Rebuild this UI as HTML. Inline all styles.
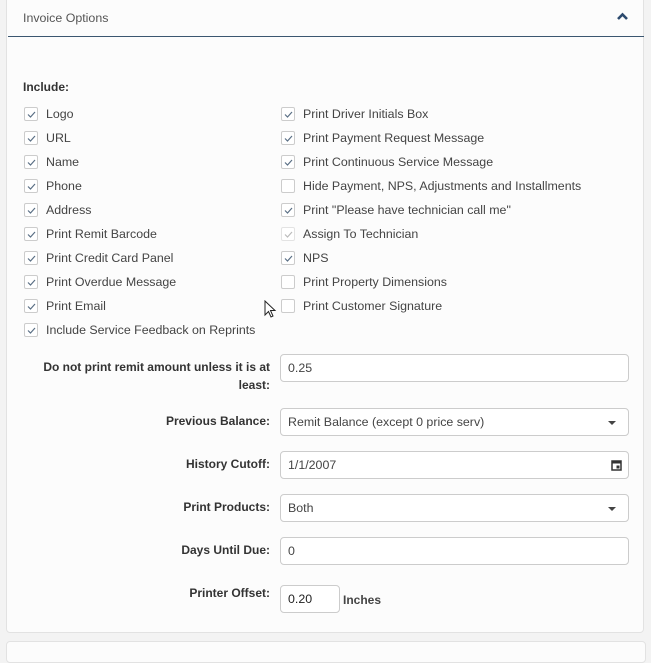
<!DOCTYPE html>
<html><head><style>
body{margin:0;width:651px;height:646px;background:#f3f3f3;font-family:"Liberation Sans",sans-serif;position:relative;overflow:hidden}
.panel{position:absolute;left:6px;top:-4px;width:638px;height:637px;background:#fcfcfc;border:1px solid #e2e2e2;border-radius:4px;box-sizing:border-box}
.p2{position:absolute;left:6px;top:641px;width:638px;height:20px;background:#fcfcfc;border:1px solid #e2e2e2;border-radius:4px}
.t{position:absolute;font-size:12.4px;color:#444;white-space:nowrap}
.cb{position:absolute;width:14px;height:14px;border:1px solid #ccc;border-radius:2px;background:#fff;box-sizing:border-box}
.cb svg{position:absolute;left:2px;top:2px}
.lbl{position:absolute;right:381px;font-size:12px;font-weight:bold;color:#333;text-align:right;white-space:nowrap}
.in{position:absolute;left:280px;width:349px;height:28px;border:1px solid #ccc;border-radius:4px;background:#fff;box-sizing:border-box;font-size:12.4px;color:#444;padding:6px 7px}
.arr{position:absolute;right:12px;top:12px;width:0;height:0;border-left:4px solid transparent;border-right:4px solid transparent;border-top:4px solid #444}
</style></head><body>
<div class="panel"></div>
<div class="p2"></div>
<div class="t" style="left:23px;top:11px;color:#555">Invoice Options</div>
<svg style="position:absolute;left:616px;top:11px" width="13" height="10"><path d="M2 8L6.5 3.5L11 8" stroke="#2c4a6e" stroke-width="2.6" fill="none"/></svg>
<div style="position:absolute;left:8px;top:36px;width:636px;height:1px;background:#3b5670"></div>
<div class="t" style="left:23px;top:80px;font-weight:bold;color:#333;font-size:12px">Include:</div>
<div id="cbs"></div>
<script>
var L=["Logo","URL","Name","Phone","Address","Print Remit Barcode","Print Credit Card Panel","Print Overdue Message","Print Email","Include Service Feedback on Reprints"];
var R=[["Print Driver Initials Box",1],["Print Payment Request Message",1],["Print Continuous Service Message",1],["Hide Payment, NPS, Adjustments and Installments",0],["Print \"Please have technician call me\"",1],["Assign To Technician",2],["NPS",1],["Print Property Dimensions",0],["Print Customer Signature",0]];
var h="";
function ck(x,y,c){var col=c==2?"#bbb":"#5a6f85";return '<div class="cb" style="left:'+x+'px;top:'+y+'px;'+(c==2?'border-color:#e3e3e3':'')+'">'+(c?'<svg width="9" height="9"><path d="M1 4.5L3.5 7L8 2" stroke="'+col+'" stroke-width="1.2" fill="none"/></svg>':'')+'</div>';}
L.forEach(function(s,i){var y=107+i*24;h+=ck(24,y,1)+'<div class="t" style="left:46px;top:'+y+'px">'+s+'</div>';});
R.forEach(function(s,i){var y=107+i*24;h+=ck(281,y,s[1])+'<div class="t" style="left:303px;top:'+y+'px">'+s[0].replace(/"/g,'&quot;')+'</div>';});
document.getElementById('cbs').innerHTML=h;
</script>
<div class="lbl" style="top:360px">Do not print remit amount unless it is at</div>
<div class="lbl" style="top:378px">least:</div>
<div class="in" style="top:354px">0.25</div>
<div class="lbl" style="top:414px">Previous Balance:</div>
<div class="in" style="top:408px">Remit Balance (except 0 price serv)<div class="arr"></div></div>
<div class="lbl" style="top:457px">History Cutoff:</div>
<div class="in" style="top:451px">1/1/2007<svg style="position:absolute;right:6px;top:7px" width="11" height="12"><rect x="1" y="2" width="9" height="9" fill="none" stroke="#333" stroke-width="1.5"/><rect x="1" y="2" width="9" height="2.5" fill="#333"/><rect x="5.5" y="6.5" width="3" height="3" fill="#333"/></svg></div>
<div class="lbl" style="top:500px">Print Products:</div>
<div class="in" style="top:494px">Both<div class="arr"></div></div>
<div class="lbl" style="top:543px">Days Until Due:</div>
<div class="in" style="top:537px">0</div>
<div class="lbl" style="top:586px">Printer Offset:</div>
<div class="in" style="top:585px;width:60px;color:#222">0.20</div>
<div class="t" style="left:343px;top:593px;font-weight:bold;color:#444;font-size:12px">Inches</div>
<svg style="position:absolute;left:264px;top:300px" width="14" height="20"><path d="M1 1L1 15L4.5 11.5L7 17L9 16L6.5 10.5L11 10.5Z" fill="#fff" stroke="#222" stroke-width="1"/></svg>
</body></html>
